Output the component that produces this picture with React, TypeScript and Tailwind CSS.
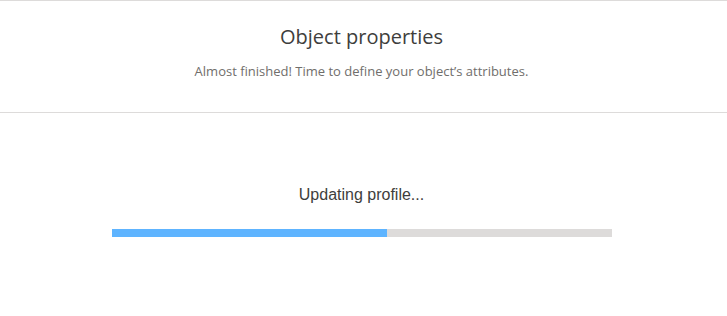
export default function App() {
  const progress = 55;

  return (
    <div className="w-[727px] h-[316px] bg-white font-['Open_Sans',sans-serif]">
      <div className="border-t border-b border-[#dddbda] h-[113px] pr-[4px] flex flex-col items-center">
        <h2 className="mt-[22px] text-[20px] leading-[28px] text-[#3e3e3c]">
          Object properties
        </h2>
        <p className="mt-[11px] text-[13px] leading-[18px] text-[#706e6b]">
          Almost finished! Time to define your object’s attributes.
        </p>
      </div>
      <div className="flex flex-col items-center pr-[4px] pt-[72px]">
        <p className="font-['Liberation_Sans',sans-serif] text-[16px] leading-[20px] text-[#3e3e3c]">
          Updating profile...
        </p>
        <div className="mt-[24px] w-[500px] h-[8px] bg-[#dddbda]">
          <div className="h-full bg-[#5eb4ff]" style={{ width: `${progress}%` }} />
        </div>
      </div>
    </div>
  );
}
